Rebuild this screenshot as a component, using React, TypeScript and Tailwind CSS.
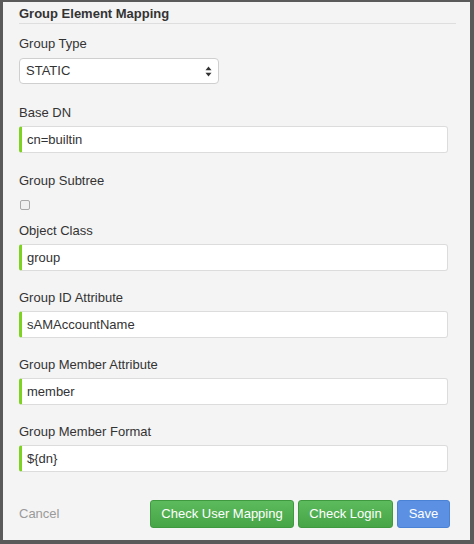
const fields = [
  { label: 'Object Class', value: 'group' },
  { label: 'Group ID Attribute', value: 'sAMAccountName' },
  { label: 'Group Member Attribute', value: 'member' },
  { label: 'Group Member Format', value: '${dn}' },
];

function TextField({ label, value, className = '' }: { label: string; value: string; className?: string }) {
  return (
    <div className={className}>
      <div className="h-[18px] text-[13px] leading-[18px] text-[#333]">{label}</div>
      <div className="mt-[4px] flex h-[27px] w-[429px] items-center rounded-[3px] border border-[#dcdcdc] border-l-[3px] border-l-[#7ed321] bg-white pl-[5px] text-[13px] text-[#333]">
        {value}
      </div>
    </div>
  );
}

export default function App() {
  return (
    <div
      className="h-[544px] w-[474px] border-b-4 border-l-[3px] border-r-4 border-t-2 border-[#5a5a5a] bg-[#f4f4f4] pl-[16px] pr-[14px] pt-[3px] text-[#333]"
      style={{ fontFamily: '"Liberation Sans", Arial, sans-serif' }}
    >
      <div className="h-[19px] border-b border-[#dedede] text-[13px] font-bold leading-[18px] text-[#333]">
        Group Element Mapping
      </div>

      {/* Group Type */}
      <div className="mt-[11px] h-[18px] text-[13px] leading-[18px]">Group Type</div>
      <div className="mt-[5px] flex h-[26px] w-[200px] items-center justify-between rounded-[4px] border border-[#cfcfcf] bg-white pl-[6px] pr-[6px] text-[13px]">
        <span>STATIC</span>
        <svg width="7" height="11" viewBox="0 0 7 11" className="text-[#333]">
          <path d="M3.5 0.5 L6.5 4.2 L0.5 4.2 Z" fill="currentColor" />
          <path d="M3.5 10.5 L6.5 6.8 L0.5 6.8 Z" fill="currentColor" />
        </svg>
      </div>

      <TextField label="Base DN" value="cn=builtin" className="mt-[20px]" />

      {/* Group Subtree */}
      <div className="mt-[19px] h-[18px] text-[13px] leading-[18px]">Group Subtree</div>
      <div className="ml-[1px] mt-[10px] h-[10px] w-[10px] rounded-[2px] border border-[#a8a8a8] bg-[#f0f0f0]" />

      {fields.map((f, i) => (
        <TextField key={f.label} label={f.label} value={f.value} className={i === 0 ? 'mt-[12px]' : 'mt-[18px]'} />
      ))}

      {/* Actions */}
      <div className="mt-[28px] flex w-[431px] items-center">
        <span className="text-[13px] text-[#9a9a9a]">Cancel</span>
        <div className="ml-auto flex gap-[4px]">
          <button className="h-[28px] w-[144px] rounded-[3px] border border-[#3f9a3f] bg-gradient-to-b from-[#5cbb5c] to-[#47a447] text-[13px] text-white">
            Check User Mapping
          </button>
          <button className="h-[28px] w-[95px] rounded-[3px] border border-[#3f9a3f] bg-gradient-to-b from-[#5cbb5c] to-[#47a447] text-[13px] text-white">
            Check Login
          </button>
          <button className="h-[28px] w-[53px] rounded-[3px] border border-[#4a82d6] bg-[#5b90e3] text-[13px] text-white">
            Save
          </button>
        </div>
      </div>
    </div>
  );
}
